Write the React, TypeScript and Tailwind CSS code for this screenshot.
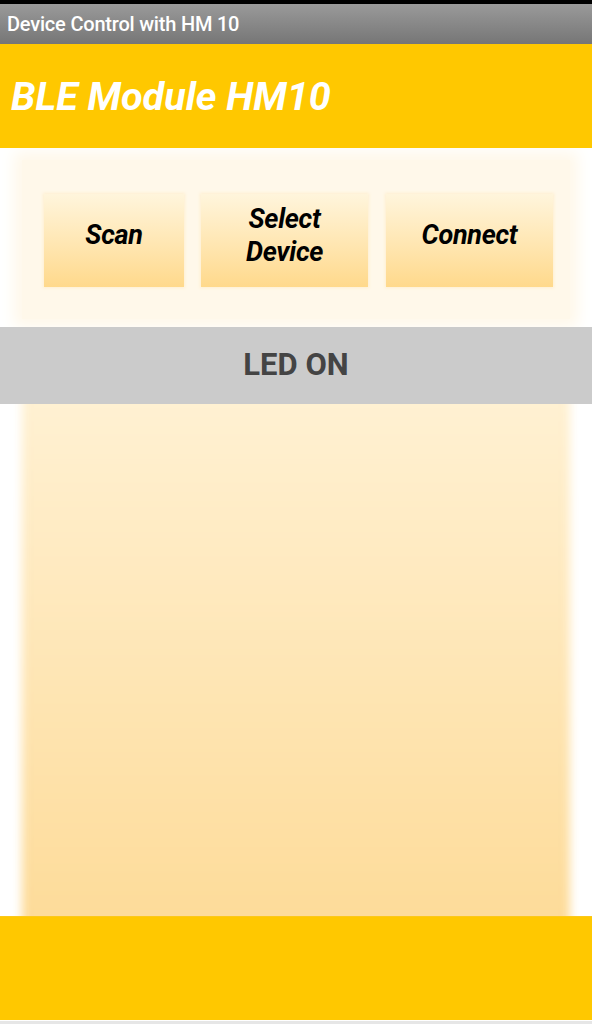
import React from 'react';

const FONT = { fontFamily: 'Roboto, "Noto Sans", sans-serif' };

const buttons = [
  { label: 'Scan', width: 'w-[140px]' },
  { label: 'Select Device', width: 'w-[167px]' },
  { label: 'Connect', width: 'w-[167px] ml-[1px]' },
];

export default function App() {
  return (
    <div className="w-[592px] h-[1024px] flex flex-col bg-white overflow-hidden" style={FONT}>
      {/* status / title bar */}
      <div className="h-[4px] bg-black" />
      <div className="h-[40px] flex items-center px-[7px] bg-gradient-to-b from-[#9a9a9a] to-[#767676]">
        <span className="text-white text-[20px] font-medium tracking-[-0.2px]">Device Control with HM 10</span>
      </div>

      {/* header */}
      <div className="h-[104px] bg-[#ffc800] flex items-center px-[11px]">
        <h1 className="text-white text-[39.5px] font-bold italic leading-none pt-[2px]">BLE Module HM10</h1>
      </div>

      {/* body */}
      <div className="h-[768px] flex flex-col overflow-hidden">
        <div className="h-[179px] flex px-[22px] pt-[12px] pb-[8px]">
          <div className="flex-1 bg-[#fff8ea] shadow-[0_0_14px_8px_#fff8ea] flex items-center pl-[22px] gap-[17px] pt-[2px]">
            {buttons.map(b => (
              <button
                key={b.label}
                className={`${b.width} h-[93px] bg-gradient-to-b from-[#fff5dc] to-[#ffd98b] shadow-[0_0_3px_1px_#ffefcf] text-black text-[27px] font-bold italic leading-[33px] tracking-[-0.3px] px-[28px] pb-[10px]`}
              >
                {b.label}
              </button>
            ))}
          </div>
        </div>

        <div className="h-[77px] bg-[#cbcbcb] flex items-center justify-center">
          <span className="text-[#444444] text-[31px] font-bold">LED ON</span>
        </div>

        <div className="flex-1 px-[22px] overflow-hidden">
          <div className="h-[calc(100%+24px)] -mt-[12px] bg-gradient-to-b from-[#fff1d3] to-[#fddb98] blur-[5px]" />
        </div>
      </div>

      {/* footer */}
      <div className="h-[104px] bg-[#ffc800] border-t border-[#fcc81a]" />
      <div className="h-[1px] bg-white" />
      <div className="flex-1 bg-[#e6e6e6]" />
    </div>
  );
}
